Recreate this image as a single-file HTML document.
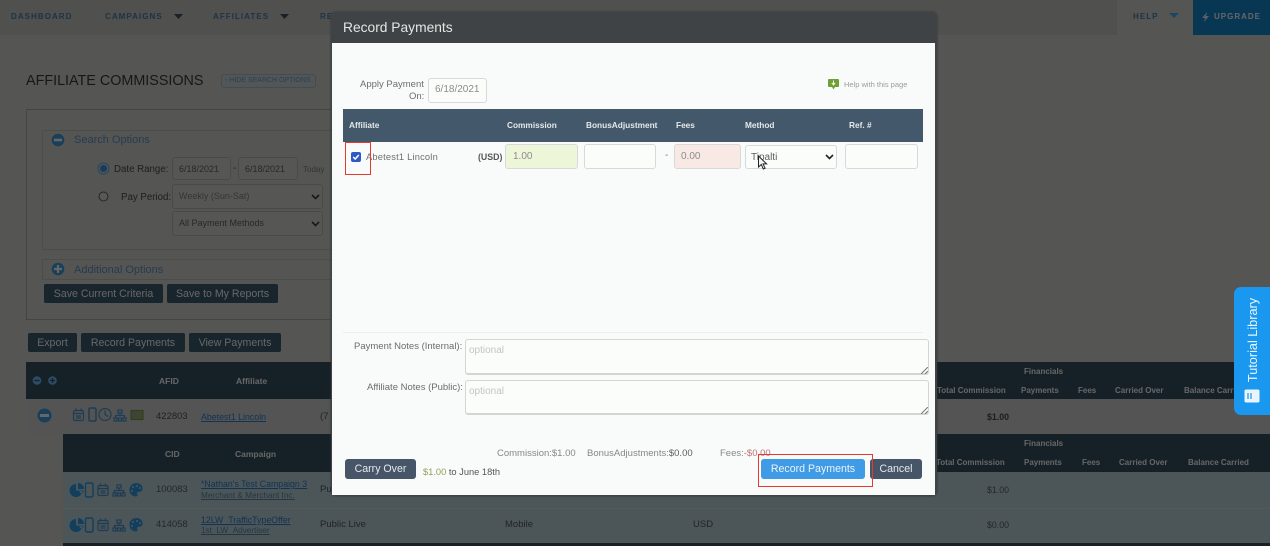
<!DOCTYPE html>
<html><head><meta charset="utf-8"><title>Record Payments</title>
<style>
html,body{margin:0;padding:0}
body{width:1270px;height:546px;overflow:hidden;position:relative;background:#d4d8d2;font-family:"Liberation Sans",sans-serif}
.a,.t{position:absolute;box-sizing:border-box}
.t{white-space:nowrap;line-height:14px}
.nav{font-size:8px;font-weight:bold;letter-spacing:1.05px;color:#4a82ae}
.btn{position:absolute;box-sizing:border-box;background:#3e5c70;color:#fff;font-size:10.6px;text-align:center;border-radius:2px;line-height:20px;white-space:nowrap}
.mbtn{position:absolute;box-sizing:border-box;color:#e5e9ec;font-size:10.6px;text-align:center;border-radius:3px;line-height:21px;height:20px;top:459px;white-space:nowrap}
.th{color:#fff;font-size:8.500px;font-weight:bold}
.th2{color:#fff;font-size:8px;font-weight:bold}
.in{position:absolute;box-sizing:border-box;border:1px solid #d7dad8;border-radius:3px;background:#fbfdfb;color:#8a8d8c;font-size:10px;padding-left:6px;white-space:nowrap}
.dk{position:absolute;box-sizing:border-box;border:1px solid #b4bab6;border-radius:3px;background:#d6dad4;color:#5e6664;font-size:9px;padding-left:6px;line-height:23px;white-space:nowrap}
.lab{color:#484f4d;font-size:9.700px}
.mh{color:#e4e9ea;font-size:8.300px;font-weight:bold}
.gr{color:#6b6e6d;font-size:9.500px}
svg{position:absolute;display:block}
</style></head><body>

<!-- top nav -->
<div class="a" style="left:0;top:0;width:1117px;height:35px;background:#c8c8c4"></div>
<div class="a" style="left:1193px;top:0;width:77px;height:35px;background:#168ad2"></div>
<span class="t nav" style="left:11px;top:10px">DASHBOARD</span>
<span class="t nav" style="left:105px;top:10px">CAMPAIGNS</span>
<svg style="left:173px;top:13px" width="11" height="7"><path d="M1 1h9L5.500 6z" fill="#3a5466"/></svg>
<span class="t nav" style="left:213px;top:10px">AFFILIATES</span>
<svg style="left:279px;top:13px" width="11" height="7"><path d="M1 1h9L5.500 6z" fill="#3a5466"/></svg>
<span class="t nav" style="left:320px;top:10px">RE</span>
<span class="t nav" style="left:1133px;top:10px">HELP</span>
<svg style="left:1168px;top:12px" width="12" height="7"><path d="M1 1h10L6 6z" fill="#48b0fe"/></svg>
<svg style="left:1201px;top:12px" width="9" height="10"><path d="M6 0L1 6h3L3 10l5-6H5z" fill="#def"/></svg>
<span class="t" style="left:1214px;top:10px;font-size:8px;font-weight:bold;letter-spacing:1px;color:#fff">UPGRADE</span>

<!-- page heading -->
<span class="t" style="left:26px;top:74px;font-size:14.350px;color:#383e3c">AFFILIATE COMMISSIONS</span>
<div class="a" style="left:221px;top:74px;width:95px;height:14px;border:1px solid #a4c0ce;border-radius:3px;background:#ced6d6"></div>
<span class="t" style="left:225px;top:74px;font-size:7px;color:#6aa0d0">- HIDE SEARCH OPTIONS</span>

<!-- search panel -->
<div class="a" style="left:26px;top:109px;width:310px;height:211px;border:1px solid #a8aca8"></div>
<div class="a" style="left:42px;top:130px;width:290px;height:120px;border:1px solid #bcc0ba;border-right:0"></div>
<div class="a" style="left:42px;top:259px;width:290px;height:21px;border:1px solid #bcc0ba;border-right:0"></div>
<svg style="left:51px;top:133px" width="14" height="14"><circle cx="7" cy="7" r="6.300" fill="#3f9fe0"/><rect x="3" y="5.700" width="8" height="2.600" fill="#fff"/></svg>
<span class="t" style="left:74px;top:133px;font-size:11px;color:#5f94c4">Search Options</span>
<svg style="left:97px;top:162px" width="13" height="13"><circle cx="6.500" cy="6.500" r="5.500" fill="none" stroke="#5aaee8"/><circle cx="6.500" cy="6.500" r="3.500" fill="#3a94e0"/></svg>
<span class="t lab" style="left:114px;top:163px">Date Range:</span>
<div class="dk" style="left:172px;top:157px;width:59px;height:23px;line-height:22px">6/18/2021</div>
<span class="t" style="left:233px;top:162px;font-size:10px;color:#5a605e">-</span>
<div class="dk" style="left:238px;top:157px;width:60px;height:23px;line-height:22px">6/18/2021</div>
<span class="t" style="left:303px;top:163px;font-size:8px;color:#7a8282">Today</span>
<svg style="left:98px;top:191px" width="11" height="11"><circle cx="5.500" cy="5.500" r="4.500" fill="#dadeda" stroke="#5a6060"/></svg>
<span class="t lab" style="left:121px;top:191px">Pay Period:</span>
<div class="dk" style="left:172px;top:184px;width:151px;height:25px;color:#828886">Weekly (Sun-Sat)</div>
<div class="dk" style="left:172px;top:211px;width:151px;height:25px">All Payment Methods</div>
<svg style="left:311px;top:194px" width="9" height="6"><path d="M1 1l3.500 3.500L8 1" fill="none" stroke="#3a4040" stroke-width="1.600"/></svg>
<svg style="left:311px;top:221px" width="9" height="6"><path d="M1 1l3.500 3.500L8 1" fill="none" stroke="#3a4040" stroke-width="1.600"/></svg>
<svg style="left:51px;top:262px" width="14" height="14"><circle cx="7" cy="7" r="6.300" fill="#3f9fe0"/><path d="M3 7h8M7 3v8" stroke="#fff" stroke-width="2.200"/></svg>
<span class="t" style="left:74px;top:263px;font-size:11px;color:#5f94c4">Additional Options</span>
<div class="btn" style="left:44px;top:284px;width:119px;height:19px">Save Current Criteria</div>
<div class="btn" style="left:167px;top:284px;width:111px;height:19px">Save to My Reports</div>
<div class="btn" style="left:28px;top:333px;width:49px;height:19px">Export</div>
<div class="btn" style="left:81px;top:333px;width:104px;height:19px">Record Payments</div>
<div class="btn" style="left:189px;top:333px;width:92px;height:19px">View Payments</div>

<!-- table -->
<div class="a" style="left:26px;top:362px;width:1244px;height:37px;background:#385462"></div>
<div class="a" style="left:26px;top:399px;width:1244px;height:35px;background:#d0d2d0"></div>
<div class="a" style="left:63px;top:434px;width:1207px;height:38px;background:#385462"></div>
<div class="a" style="left:63px;top:472px;width:1207px;height:36px;background:#bed6dc"></div>
<div class="a" style="left:63px;top:508px;width:1207px;height:35px;background:#bed6dc;border-top:1px solid #cce2de"></div>
<div class="a" style="left:0;top:543px;width:1270px;height:3px;background:#385462"></div>
<div class="a" style="left:0;top:542px;width:63px;height:4px;background:#d4d8d2"></div>

<svg style="left:32px;top:375px" width="26" height="11"><circle cx="5" cy="5.500" r="4.300" fill="#72befa"/><rect x="2.500" y="4.800" width="5" height="1.400" fill="#385462"/><circle cx="20.500" cy="5.500" r="4.300" fill="#72befa"/><path d="M18 5.500h5M20.500 3v5" stroke="#385462" stroke-width="1.300"/></svg>
<span class="t th" style="left:159px;top:374px">AFID</span>
<span class="t th" style="left:236px;top:374px">Affiliate</span>
<svg style="left:37px;top:408px" width="15" height="15"><circle cx="7.500" cy="7.500" r="7" fill="#3f9fe0"/><rect x="3" y="6" width="9" height="3" fill="#fff"/></svg>

<!-- row 1 icons -->
<svg style="left:72px;top:407px" width="72" height="18" fill="none" stroke="#4a96d0" stroke-width="1.200">
<rect x="1.500" y="3.500" width="10" height="10" rx="1.500"/><path d="M1.500 6.500h10M4 1.500v3M9 1.500v3M4 9h5M4 11h5"/>
<rect x="17" y="1" width="7" height="13" rx="1.500" stroke-width="1.500"/>
<circle cx="33" cy="7.500" r="6"/><path d="M33 3.500v4l3 2"/>
<path d="M46 3h4v3h-4zM42 11h3v3h-3zM46.500 11h3v3h-3zM51 11h3v3h-3zM48 6v2.500M43.500 11V8.500h9V11"/>
<rect x="59" y="3.500" width="12" height="9" fill="#a0aa86" stroke="#7f9f48"/>
</svg>
<span class="t" style="left:156px;top:410px;font-size:9.500px;color:#505858">422803</span>
<span class="t" style="left:201px;top:410px;font-size:8.800px;color:#2f7fd0;text-decoration:underline">Abetest1 Lincoln</span>
<span class="t" style="left:320px;top:410px;font-size:9.500px;color:#505858">(7</span>

<span class="t th" style="left:165px;top:447px">CID</span>
<span class="t th" style="left:235px;top:447px">Campaign</span>

<!-- sub rows -->
<svg style="left:69px;top:482px" width="76" height="18">
<path d="M7 2a6.500 6.500 0 1 0 6.500 6.500H7zM9 1v6h6a6 6 0 0 0-6-6zM10 9l5 .1-2.500 3z" fill="#2f9ee8"/>
<rect x="16.500" y="1" width="7.500" height="14" rx="1.600" fill="none" stroke="#2f9ee8" stroke-width="1.400"/>
<g fill="none" stroke="#4a96d0" stroke-width="1.200"><rect x="29" y="3.500" width="10" height="10" rx="1.500"/><path d="M29 6.500h10M31.500 1.500v3M36.500 1.500v3M31.500 9h5M31.500 11h5"/>
<path d="M48 3h4v3h-4zM44 11h3v3h-3zM48.500 11h3v3h-3zM53 11h3v3h-3zM50 6v2.500M45.500 11V8.500h9V11"/></g>
<path d="M67 1a7 6.500 0 0 0-6.500 7c0 4 3 6.500 6.500 6.500 2 0 1.500-2 1-3 0-1.500 1-1.800 2.500-1.800 1.800 0 3-1 3-3.200C73.500 3 71 1 67 1z" fill="#2f9ee8"/>
<g fill="#bed6dc"><circle cx="64" cy="5" r="1"/><circle cx="68" cy="4" r="1"/><circle cx="71" cy="6" r="1"/><circle cx="63" cy="9" r="1"/></g>
</svg>
<span class="t" style="left:156px;top:483px;font-size:9.500px;color:#586466">100083</span>
<span class="t" style="left:201px;top:477px;font-size:8.800px;color:#2f7fd0;text-decoration:underline">*Nathan's Test Campaign 3</span>
<span class="t" style="left:201px;top:489px;font-size:8.200px;color:#5a88a8;text-decoration:underline">Merchant &amp; Merchant Inc.</span>
<span class="t" style="left:320px;top:483px;font-size:9.500px;color:#505858">Pu</span>

<svg style="left:69px;top:517px" width="76" height="18">
<path d="M7 2a6.500 6.500 0 1 0 6.500 6.500H7zM9 1v6h6a6 6 0 0 0-6-6zM10 9l5 .1-2.500 3z" fill="#2f9ee8"/>
<rect x="16.500" y="1" width="7.500" height="14" rx="1.600" fill="none" stroke="#2f9ee8" stroke-width="1.400"/>
<g fill="none" stroke="#4a96d0" stroke-width="1.200"><rect x="29" y="3.500" width="10" height="10" rx="1.500"/><path d="M29 6.500h10M31.500 1.500v3M36.500 1.500v3M31.500 9h5M31.500 11h5"/>
<path d="M48 3h4v3h-4zM44 11h3v3h-3zM48.500 11h3v3h-3zM53 11h3v3h-3zM50 6v2.500M45.500 11V8.500h9V11"/></g>
<path d="M67 1a7 6.500 0 0 0-6.500 7c0 4 3 6.500 6.500 6.500 2 0 1.500-2 1-3 0-1.500 1-1.800 2.500-1.800 1.800 0 3-1 3-3.200C73.500 3 71 1 67 1z" fill="#2f9ee8"/>
<g fill="#bed6dc"><circle cx="64" cy="5" r="1"/><circle cx="68" cy="4" r="1"/><circle cx="71" cy="6" r="1"/><circle cx="63" cy="9" r="1"/></g>
</svg>
<span class="t" style="left:156px;top:518px;font-size:9.500px;color:#586466">414058</span>
<span class="t" style="left:201px;top:513px;font-size:8.800px;color:#2f7fd0;text-decoration:underline">12LW_TrafficTypeOffer</span>
<span class="t" style="left:201px;top:524px;font-size:8.200px;color:#5a88a8;text-decoration:underline">1st_LW_Advertiser</span>
<span class="t" style="left:320px;top:518px;font-size:9.500px;color:#505858">Public Live</span>
<span class="t" style="left:505px;top:518px;font-size:9.500px;color:#505858">Mobile</span>
<span class="t" style="left:693px;top:518px;font-size:9.500px;color:#505858">USD</span>

<!-- right table part -->
<span class="t th2" style="left:1024px;top:365px">Financials</span>
<span class="t th2" style="left:937px;top:384px">Total Commission</span>
<span class="t th2" style="left:1021px;top:384px">Payments</span>
<span class="t th2" style="left:1078px;top:384px">Fees</span>
<span class="t th2" style="left:1115px;top:384px">Carried Over</span>
<span class="t th2" style="left:1184px;top:384px">Balance Carried</span>
<span class="t" style="left:987px;top:410px;font-size:8.800px;font-weight:bold;color:#444c4c">$1.00</span>
<span class="t th2" style="left:1024px;top:437px">Financials</span>
<span class="t th2" style="left:936px;top:456px">Total Commission</span>
<span class="t th2" style="left:1024px;top:456px">Payments</span>
<span class="t th2" style="left:1082px;top:456px">Fees</span>
<span class="t th2" style="left:1119px;top:456px">Carried Over</span>
<span class="t th2" style="left:1188px;top:456px">Balance Carried</span>
<span class="t" style="left:987px;top:483px;font-size:8.800px;color:#586262">$1.00</span>
<span class="t" style="left:987px;top:518px;font-size:8.800px;color:#586262">$0.00</span>

<!-- dimming overlay -->
<div class="a" style="left:0;top:0;width:1270px;height:546px;background:rgba(0,0,0,.6)"></div>

<!-- tutorial tab -->
<div class="a" style="left:1234px;top:287px;width:36px;height:128px;background:#1a97ee;border-radius:7px 0 0 7px"></div>
<span class="t" style="left:1253px;top:340px;font-size:12.700px;color:#e9f5fd;transform:translate(-50%,-50%) rotate(-90deg)">Tutorial Library</span>
<svg style="left:1244px;top:389px" width="16" height="14"><rect x=".5" y=".5" width="15" height="13" rx="1.500" fill="#e9f5fd"/><path d="M4 4v6M7 4v6" stroke="#1a97ee" stroke-width="1.200"/></svg>

<!-- modal -->
<div class="a" style="left:331px;top:12px;width:606px;height:484px;background:#3f4345;border-radius:5px;box-shadow:0 0 2px #333"></div>
<div class="a" style="left:332px;top:43px;width:603px;height:452px;background:#f8fbf9"></div>
<span class="t" style="left:343px;top:21px;font-size:13.800px;color:#e3e6e5">Record Payments</span>

<span class="t gr" style="left:360px;top:78px">Apply Payment</span>
<span class="t gr" style="left:409px;top:90px">On:</span>
<div class="in" style="left:428px;top:78px;width:59px;height:25px;line-height:22px">6/18/2021</div>
<svg style="left:827px;top:78px" width="13" height="13"><path d="M2 1h9a1 1 0 0 1 1 1v6a1 1 0 0 1-1 1H8l-1.500 2.500L5 9H2a1 1 0 0 1-1-1V2a1 1 0 0 1 1-1z" fill="#6ea135"/><path d="M6.500 2.500v4M4.800 5l1.700 2 1.700-2" stroke="#f3f7ec" fill="none"/></svg>
<span class="t" style="left:844px;top:78px;font-size:7.500px;color:#9a9d9c">Help with this page</span>

<div class="a" style="left:343px;top:109px;width:580px;height:33px;background:#43586a"></div>
<span class="t mh" style="left:349px;top:118px">Affiliate</span>
<span class="t mh" style="left:507px;top:118px">Commission</span>
<span class="t mh" style="left:586px;top:118px">BonusAdjustment</span>
<span class="t mh" style="left:676px;top:118px">Fees</span>
<span class="t mh" style="left:745px;top:118px">Method</span>
<span class="t mh" style="left:849px;top:118px">Ref. #</span>

<div class="a" style="left:351px;top:152px;width:10px;height:10px;background:#2a5bc4;border-radius:2px"></div>
<svg style="left:351px;top:152px" width="10" height="10"><path d="M2.200 5l2 2 3.600-4" fill="none" stroke="#fff" stroke-width="1.500"/></svg>
<span class="t" style="left:366px;top:150px;font-size:9.300px;color:#6d7070;letter-spacing:.2px">Abetest1 Lincoln</span>
<span class="t" style="left:478px;top:150px;font-size:8.800px;font-weight:bold;color:#555857">(USD)</span>
<div class="a" style="left:345px;top:142px;width:26px;height:33px;border:1.500px solid #e53a2e"></div>
<div class="in" style="left:505px;top:144px;width:73px;height:25px;line-height:24px;background:#eef6d9;font-size:10px;padding-left:7px">1.00</div>
<div class="in" style="left:584px;top:144px;width:72px;height:25px"></div>
<span class="t" style="left:665px;top:149px;font-size:10px;color:#b7636b">-</span>
<div class="in" style="left:674px;top:144px;width:67px;height:25px;line-height:24px;background:#f8e9e4;font-size:10px;padding-left:6px">0.00</div>
<div class="in" style="left:745px;top:145px;width:92px;height:24px;line-height:23px;color:#5c5f5e;padding-left:5px">Tipalti</div>
<svg style="left:825px;top:154px" width="9" height="6"><path d="M1 1l3.500 3.500L8 1" fill="none" stroke="#222" stroke-width="1.600"/></svg>
<svg style="left:757px;top:155px" width="11" height="16"><path d="M1.500 1v11l2.800-2.500 2 4.500 1.800-.8-2-4.300h3.500z" fill="#f4f4f4" stroke="#222"/></svg>
<div class="in" style="left:845px;top:144px;width:73px;height:25px"></div>

<div class="a" style="left:343px;top:332px;width:580px;height:1px;background:#eceeed"></div>
<span class="t gr" style="left:354px;top:340px">Payment Notes (Internal):</span>
<span class="t gr" style="left:367px;top:381px">Affiliate Notes (Public):</span>
<div class="in" style="left:465px;top:339px;width:464px;height:36px;line-height:21px;color:#c2c5c4;padding-left:3px;border-color:#d3d6d4;border-width:1px 1px 2px">optional</div>
<div class="in" style="left:465px;top:380px;width:464px;height:35px;line-height:21px;color:#c2c5c4;padding-left:3px;border-color:#d3d6d4;border-width:1px 1px 2px">optional</div>
<svg style="left:921px;top:367px" width="7" height="7"><path d="M0 7l7-7M4 7l3-3" stroke="#777" fill="none"/></svg>
<svg style="left:921px;top:407px" width="7" height="7"><path d="M0 7l7-7M4 7l3-3" stroke="#777" fill="none"/></svg>

<span class="t" style="left:497px;top:447px;font-size:9.500px;color:#858887">Commission:$1.00</span>
<span class="t" style="left:587px;top:447px;font-size:9.500px;color:#858887">BonusAdjustments:<span style="color:#5d605f">$0.00</span></span>
<span class="t" style="left:720px;top:447px;font-size:9.500px;color:#858887">Fees:<span style="color:#c0727a">-$0.00</span></span>

<div class="mbtn" style="left:345px;width:71px;background:#465668">Carry Over</div>
<span class="t" style="left:423px;top:465px;font-size:9.300px;color:#555">
<span style="color:#8ea25c">$1.00</span> to June 18th</span>
<div class="mbtn" style="left:761px;width:104px;background:#3f9be5;color:#e9f3fb">Record Payments</div>
<div class="mbtn" style="left:870px;width:52px;background:#465668">Cancel</div>
<div class="a" style="left:758px;top:454px;width:115px;height:33px;border:1.500px solid #e53a2e"></div>

</body></html>
